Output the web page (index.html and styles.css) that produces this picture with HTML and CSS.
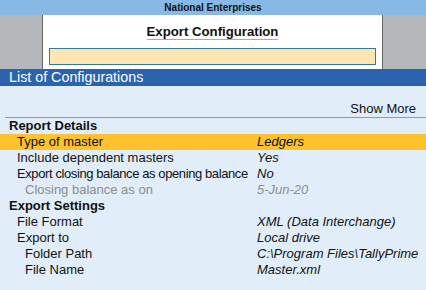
FILE: index.html
```html
<!DOCTYPE html>
<html>
<head>
<meta charset="utf-8">
<link rel="stylesheet" href="styles.css">
</head>
<body>
<div class="topbar">National Enterprises</div>
<div class="header">
  <div class="dialog">
    <div class="title"><span>Export Configuration</span></div>
    <div class="input"></div>
  </div>
</div>
<div class="listbar">List of Configurations</div>
<div class="content">
  <div class="showmore"><span>Show More</span></div>
  <div class="row head"><span class="label">Report Details</span></div>
  <div class="row sel"><span class="label l1">Type of master</span><span class="value">Ledgers</span></div>
  <div class="row"><span class="label l1">Include dependent masters</span><span class="value">Yes</span></div>
  <div class="row"><span class="label l1 tight">Export closing balance as opening balance</span><span class="value">No</span></div>
  <div class="row dim"><span class="label l2">Closing balance as on</span><span class="value">5-Jun-20</span></div>
  <div class="row head"><span class="label">Export Settings</span></div>
  <div class="row"><span class="label l1">File Format</span><span class="value">XML (Data Interchange)</span></div>
  <div class="row"><span class="label l1">Export to</span><span class="value">Local drive</span></div>
  <div class="row"><span class="label l2">Folder Path</span><span class="value">C:\Program Files\TallyPrime</span></div>
  <div class="row"><span class="label l2">File Name</span><span class="value">Master.xml</span></div>
</div>
</body>
</html>
```

FILE: styles.css
```css
html, body {
  margin: 0;
  padding: 0;
  width: 426px;
  height: 290px;
  overflow: hidden;
  font-family: "Liberation Sans", Arial, sans-serif;
  background: #e1eef9;
  color: #111;
}
.topbar {
  height: 15px;
  background: #87b9e4;
  font-size: 10px;
  font-weight: bold;
  line-height: 15px;
  text-align: center;
}
.header {
  height: 54px;
  background: #b5b8bb;
  display: flex;
}
.dialog {
  margin-left: 42px;
  width: 339px;
  background: #fff;
  border-left: 1px solid #666;
  border-right: 1px solid #666;
  display: flex;
  flex-direction: column;
  align-items: center;
}
.title {
  margin-top: 9px;
  height: 16px;
}
.title span {
  display: block;
  font-size: 13.2px;
  font-weight: bold;
  line-height: 15px;
  border-bottom: 1px solid #aaa;
}
.input {
  margin-top: 8px;
  width: 325px;
  height: 15px;
  background: #fde6b1;
  border: 1px solid #2f7d98;
}
.listbar {
  height: 17px;
  background: #2b63ae;
  color: #fff;
  font-size: 14.3px;
  line-height: 17px;
  padding-left: 9px;
}
.content {
  background: #e1eef9;
}
.showmore {
  height: 31px;
  margin-left: 5px;
  border-bottom: 1px solid #8e9aa5;
  display: flex;
  align-items: flex-end;
  justify-content: flex-end;
  padding-right: 10px;
  font-size: 13px;
  line-height: 16px;
}
.row {
  display: grid;
  grid-template-columns: 257px 1fr;
  height: 16px;
  font-size: 13px;
  line-height: 16px;
}
.label {
  padding-left: 9px;
  white-space: nowrap;
}
.label.l1 { padding-left: 17px; }
.label.l2 { padding-left: 25px; }
.label.tight { letter-spacing: -0.4px; }
.value {
  font-style: italic;
  white-space: nowrap;
}
.head .label { font-weight: bold; }
.sel { background: #fec22f; }
.dim { color: #8c8c8c; }
```
